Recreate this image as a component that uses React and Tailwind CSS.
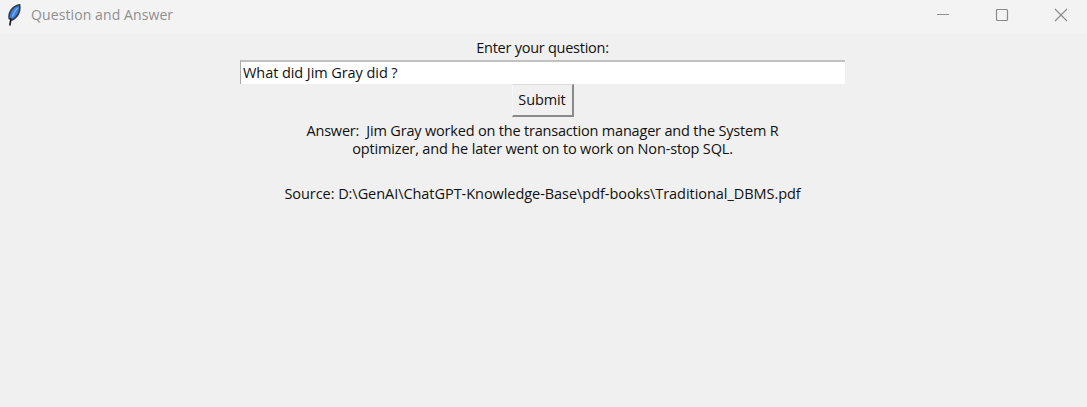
import React from "react";

const font = "font-['Open_Sans','Liberation_Sans',sans-serif]";

function Feather() {
  return (
    <svg width="14" height="22" viewBox="0 0 14 22" className="shrink-0">
      <path d="M2.2 14.5 C1.2 8.5 5 2.5 12.6 0.8 C13.6 6.5 11.5 13 5 16 Z" fill="#3b82d8" stroke="#2f3a4c" strokeWidth="1.6" />
      <path d="M5.5 12.5 C6.5 9.5 8 7 10.5 4" fill="none" stroke="#9cc6f0" strokeWidth="1" />
      <path d="M2.8 21.5 L4 14.5" fill="none" stroke="#15181f" strokeWidth="1.6" />
    </svg>
  );
}

export default function App() {
  return (
    <div className={`${font} w-[1087px] h-[407px] flex flex-col bg-[#f0f0f0] overflow-hidden`}>
      <div className="h-[34px] shrink-0 flex items-center justify-between bg-[#f3f3f3]">
        <div className="flex items-center pl-[7px] gap-[10px] -mt-[5px]">
          <Feather />
          <span className="text-[14px] text-[#8f8f8f] leading-none tracking-[0.1px]">Question and Answer</span>
        </div>
        <div className="flex items-center h-full -mt-[5px] pr-[18px] gap-[43px]">
          <svg width="16" height="16" viewBox="0 0 16 16"><path d="M2 7.5 H14" stroke="#8f8f8f" strokeWidth="1" /></svg>
          <svg width="16" height="16" viewBox="0 0 16 16"><rect x="2.5" y="2.5" width="11" height="11" rx="1" fill="none" stroke="#8a8a8a" strokeWidth="1.2" /></svg>
          <svg width="16" height="16" viewBox="0 0 16 16"><path d="M2 2 L14 14 M14 2 L2 14" stroke="#8a8a8a" strokeWidth="1.1" /></svg>
        </div>
      </div>
      <div className="flex flex-col items-center pr-[2px] text-[#111111] text-[14.5px]">
        <div className="leading-[20px] mt-[4px] h-[22px] tracking-[-0.25px]">Enter your question:</div>
        <div className="w-[605px] h-[24px] bg-white border-t-2 border-l border-t-[#c0c0c0] border-l-[#a8a8a8] flex items-center pl-[2px] leading-none tracking-[-0.07px]">
          What did Jim Gray did ?
        </div>
        <button className="w-[62px] h-[33px] bg-[#f0f0f0] border border-r-2 border-b-2 border-r-[#8a8a8a] border-b-[#8a8a8a] border-t-[#dcdcdc] border-l-[#f6f6f6] leading-none tracking-[-0.1px]">
          Submit
        </button>
        <div className="mt-[5px] w-[500px] text-center leading-[18px]">
          <div className="tracking-[-0.19px]">Answer:&nbsp; Jim Gray worked on the transaction manager and the System R</div>
          <div className="tracking-[-0.15px]">optimizer, and he later went on to work on Non-stop SQL.</div>
        </div>
        <div className="mt-[27px] leading-[18px] tracking-[-0.05px]">Source: D:\GenAI\ChatGPT-Knowledge-Base\pdf-books\Traditional_DBMS.pdf</div>
      </div>
    </div>
  );
}
